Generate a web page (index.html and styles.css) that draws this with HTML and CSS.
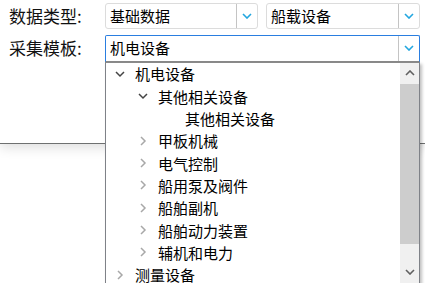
FILE: index.html
```html
<!DOCTYPE html>
<html>
  <head>
    <title>采集模板</title>
    <link rel="stylesheet" href="styles.css">
  </head>
  <body>
    <div class="panel">
      <div class="row">
        <span class="label">数据类型:</span>
        <div class="combo w1">
          <span class="val">基础数据</span>
          <span class="btn"><svg width="10" height="6" viewBox="0 0 10 6"><polyline points="1,1 5,5 9,1" /></svg></span>
        </div>
        <div class="combo w2">
          <span class="val">船载设备</span>
          <span class="btn"><svg width="10" height="6" viewBox="0 0 10 6"><polyline points="1,1 5,5 9,1" /></svg></span>
        </div>
      </div>
      <div class="row">
        <span class="label">采集模板:</span>
        <div class="combo w3 focus">
          <span class="val">机电设备</span>
          <span class="btn"><svg width="10" height="6" viewBox="0 0 10 6"><polyline points="1,1 5,5 9,1" /></svg></span>

          <div class="popup">
            <ul class="tree">
              <li class="node lv0 open"><i class="arrow"></i>机电设备</li>
              <li class="node lv1 open"><i class="arrow"></i>其他相关设备</li>
              <li class="node lv2 leaf"><i class="arrow"></i>其他相关设备</li>
              <li class="node lv1"><i class="arrow"></i>甲板机械</li>
              <li class="node lv1"><i class="arrow"></i>电气控制</li>
              <li class="node lv1"><i class="arrow"></i>船用泵及阀件</li>
              <li class="node lv1"><i class="arrow"></i>船舶副机</li>
              <li class="node lv1"><i class="arrow"></i>船舶动力装置</li>
              <li class="node lv1"><i class="arrow"></i>辅机和电力</li>
              <li class="node lv0"><i class="arrow"></i>测量设备</li>
            </ul>
            <div class="scroll">
              <div class="sbtn"><svg width="10" height="6" viewBox="0 0 10 6"><polyline points="1,5 5,1 9,5" /></svg></div>
              <div class="thumb"></div>
              <div class="sbtn down"><svg width="10" height="6" viewBox="0 0 10 6"><polyline points="1,1 5,5 9,1" /></svg></div>
            </div>
          </div>
        </div>
      </div>
    </div>
  </body>
</html>
```

FILE: styles.css
```css
html, body { height: 100%; }
body { margin: 0; min-height: 283px; background: #fff; font-family: "Noto Sans CJK SC", "Noto Sans", sans-serif; font-size: 15px; color: #000; }

.panel { position: relative; z-index: 1; height: 144px; box-sizing: border-box; padding: 3px 0 0 9px; background: #fff; border-bottom: 1px solid #6e7070; box-shadow: 0 3px 12px rgba(0, 0, 0, 0.14); }
.row { display: flex; align-items: center; height: 26px; margin-bottom: 6px; }
.label { width: 96px; font-size: 17px; line-height: 26px; color: #111; }

.combo { position: relative; display: flex; height: 26px; box-sizing: border-box; border: 1px solid #dcdcdc; border-radius: 3px; background: #fff; }
.combo.w1 { width: 153px; }
.combo.w2 { width: 154px; margin-left: 8px; }
.combo.w3 { width: 315px; height: 27px; }
.combo.focus { border-color: #2a7ee0; border-bottom-color: #8a8a8a; border-radius: 2px 2px 0 0; }
.val { flex: 1; padding-left: 4px; line-height: 24px; }
.btn { width: 20px; display: flex; align-items: center; justify-content: center; border-left: 1px solid #c4c4c4; }
.btn svg polyline { fill: none; stroke: #22a6df; stroke-width: 1.6; }

.popup { position: absolute; z-index: 5; left: -1px; top: 26px; width: 315px; height: 222px; box-sizing: border-box; display: flex; background: #fff; border: 1px solid #7f8288; border-top-color: #8a8a8a; box-shadow: 2px 2px 3px rgba(0, 0, 0, 0.25); }
.tree { list-style: none; margin: 0; padding: 0; flex: 1; }
.node { display: flex; align-items: center; height: 22.35px; white-space: nowrap; }
.lv0 { padding-left: 9px; }
.lv1 { padding-left: 32px; }
.lv2 { padding-left: 59px; }
.arrow { width: 10px; height: 10px; margin-right: 10px; background: no-repeat center / 10px 10px url("data:image/svg+xml,%3Csvg xmlns='http://www.w3.org/2000/svg' viewBox='0 0 10 10'%3E%3Cpolyline points='3,1 7,5 3,9' fill='none' stroke='%23a8a8a8' stroke-width='1.5'/%3E%3C/svg%3E"); }
.open .arrow { background-image: url("data:image/svg+xml,%3Csvg xmlns='http://www.w3.org/2000/svg' viewBox='0 0 10 10'%3E%3Cpolyline points='1,3 5,7 9,3' fill='none' stroke='%23444' stroke-width='1.5'/%3E%3C/svg%3E"); }
.leaf .arrow { background: none; }

.scroll { width: 19px; display: flex; flex-direction: column; background: #f0f0f0; }
.sbtn { height: 21px; display: flex; align-items: center; justify-content: center; }
.sbtn svg polyline { fill: none; stroke: #606060; stroke-width: 1.6; }
.thumb { height: 160px; background: #cdcdcd; }
.down { margin-top: auto; }
```
